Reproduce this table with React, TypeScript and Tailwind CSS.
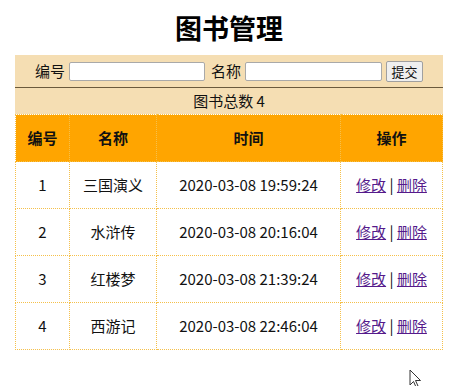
const books = [
  { id: 1, name: "三国演义", time: "2020-03-08 19:59:24" },
  { id: 2, name: "水浒传", time: "2020-03-08 20:16:04" },
  { id: 3, name: "红楼梦", time: "2020-03-08 21:39:24" },
  { id: 4, name: "西游记", time: "2020-03-08 22:46:04" },
];

const font = { fontFamily: '"Noto Sans CJK SC", "Noto Sans", sans-serif' };

export default function App() {
  return (
    <div className="relative h-[386px] w-[474px] bg-white text-[15px] text-[#111]" style={font}>
      <h1 className="flex h-[41px] items-end justify-center pr-[16px] text-[27px] font-bold leading-none text-black">
        图书管理
      </h1>

      <div className="ml-[15px] mt-[14px] w-[428px]">
        <div className="flex h-[33px] items-center justify-center whitespace-nowrap border-b border-[#6b5a3c] bg-[#f5deb3]">
          <span className="shrink-0">编号</span>
          <input className="ml-[4px] h-[19px] w-[136px] shrink-0 rounded-[2px] border border-[#a9a9a9] bg-white" />
          <span className="ml-[6px] shrink-0">名称</span>
          <input className="ml-[4px] h-[19px] w-[137px] shrink-0 rounded-[2px] border border-[#a9a9a9] bg-white" />
          <button className="ml-[4px] h-[21px] w-[37px] shrink-0 rounded-[2px] border border-[#a0a0a0] bg-[#efefef] text-[13px] leading-none">
            提交
          </button>
        </div>
        <div className="flex h-[26px] items-center justify-center bg-[#f5deb3]">图书总数 4</div>

        <table className="w-full border-collapse text-center">
          <thead>
            <tr className="h-[47px] bg-[#ffa500] font-bold">
              <th className="w-[54px] border border-dotted border-[#f5c04a]">编号</th>
              <th className="w-[87px] border border-dotted border-[#f5c04a]">名称</th>
              <th className="w-[184px] border border-dotted border-[#f5c04a]">时间</th>
              <th className="border border-dotted border-[#f5c04a]">操作</th>
            </tr>
          </thead>
          <tbody>
            {books.map((b) => (
              <tr key={b.id} className="h-[47px]">
                <td className="border border-dotted border-[#f5c04a]">{b.id}</td>
                <td className="border border-dotted border-[#f5c04a]">{b.name}</td>
                <td className="border border-dotted border-[#f5c04a]">{b.time}</td>
                <td className="border border-dotted border-[#f5c04a]">
                  <a href="#" className="text-[#551a8b] underline">修改</a> |{" "}
                  <a href="#" className="text-[#551a8b] underline">删除</a>
                </td>
              </tr>
            ))}
          </tbody>
        </table>
      </div>

      {/* mouse cursor */}
      <svg className="absolute left-[409px] top-[369px]" width="14" height="20" viewBox="0 0 14 20">
        <path d="M1 1 L1 16 L4.5 12.5 L7 18 L9 17 L6.5 11.5 L11.5 11.5 Z" fill="white" stroke="#333" strokeWidth="1" />
      </svg>
    </div>
  );
}
